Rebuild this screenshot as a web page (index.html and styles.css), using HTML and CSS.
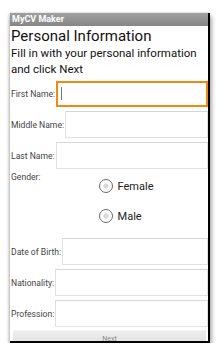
FILE: index.html
```html
<!DOCTYPE html>
<html lang="en">
<head>
    <meta charset="UTF-8">
    <meta name="viewport" content="width=device-width, initial-scale=1">
    <title>MyCV Maker</title>
    <link rel="stylesheet" href="styles.css">
</head>
<body>
    <div class="phone">
        <div class="titlebar">MyCV Maker</div>
        <div class="content">
            <h1 class="content__title">Personal Information</h1>
            <p class="content__intro">Fill in with your personal information and click Next</p>

            <div class="form__row form__row--first">
                <label class="form__label">First Name:</label>
                <div class="form__input form__input--focus"><span class="form__cursor"></span></div>
            </div>
            <div class="form__row">
                <label class="form__label">Middle Name:</label>
                <div class="form__input"></div>
            </div>
            <div class="form__row">
                <label class="form__label">Last Name:</label>
                <div class="form__input"></div>
            </div>

            <div class="gender">
                <label class="form__label">Gender:</label>
                <div class="gender__group">
                    <div class="radio"><span class="radio__circle"></span>Female</div>
                    <div class="radio"><span class="radio__circle"></span>Male</div>
                </div>
            </div>

            <div class="form__row">
                <label class="form__label">Date of Birth:</label>
                <div class="form__input"></div>
            </div>
            <div class="form__row">
                <label class="form__label">Nationality:</label>
                <div class="form__input"></div>
            </div>
            <div class="form__row">
                <label class="form__label">Profession:</label>
                <div class="form__input"></div>
            </div>

            <div class="button">Next</div>
        </div>
    </div>
</body>
</html>
```

FILE: styles.css
```css
body {
    margin: 0;
    background-color: #ffffff;
    font-family: Roboto, "Liberation Sans", sans-serif;
}

.phone {
    margin: 13px 0 0 10px;
    width: 198px;
    height: 328px;
    background-color: #ffffff;
    border-right: 2px solid #000000;
    border-bottom: 2px solid #000000;
    box-shadow: 1px 3px 5px rgba(0, 0, 0, 0.45), -1px 0 2px rgba(0, 0, 0, 0.15);
    overflow: hidden;
}

.titlebar {
    height: 13px;
    line-height: 13px;
    padding-left: 2px;
    background: linear-gradient(#a0a0a0, #868686);
    color: #ffffff;
    font-size: 9px;
    font-weight: bold;
}

.content {
    padding-left: 1px;
}

.content__title {
    margin: 0;
    font-size: 15px;
    font-weight: normal;
    line-height: 19px;
    color: #111111;
    padding-top: 1px;
}

.content__intro {
    margin: 0;
    font-size: 11.5px;
    line-height: 15.5px;
    color: #111111;
}

.form__row {
    display: flex;
    align-items: center;
    height: 27px;
    margin-top: 4px;
}

.form__row--first {
    margin-top: 3px;
}

.form__label {
    font-size: 8.6px;
    color: #444444;
    white-space: nowrap;
}

.form__input {
    flex: 1;
    height: 100%;
    margin-left: 1px;
    box-sizing: border-box;
    border: 1px solid #e0e0e0;
    border-top-color: #d6d6d6;
    background-color: #ffffff;
}

.form__input--focus {
    height: 26px;
    border: 2px solid #f08a12;
    display: flex;
    align-items: center;
    padding-left: 3px;
}

.form__cursor {
    width: 1px;
    height: 13px;
    background-color: #777777;
}

.gender {
    display: flex;
    align-items: flex-start;
    height: 62px;
    margin-top: 3px;
}

.gender__group {
    margin-left: 58px;
    padding-top: 7px;
    display: flex;
    flex-direction: column;
    gap: 16px;
}

.radio {
    display: flex;
    align-items: center;
    font-size: 11px;
    color: #222222;
}

.radio__circle {
    width: 12px;
    height: 12px;
    margin-right: 5px;
    border: 1px solid #6a6a6a;
    border-radius: 50%;
    background: radial-gradient(circle, #d8d8d8 0, #d8d8d8 2px, #ffffff 3px);
}

.button {
    margin: 3px 2px 0 2px;
    height: 14px;
    box-sizing: border-box;
    padding-top: 4px;
    line-height: 8px;
    text-align: center;
    font-size: 7px;
    color: #8a8a8a;
    background: linear-gradient(#eeeeee, #e2e2e2);
    border-top: 1px solid #f4f4f4;
}
```
